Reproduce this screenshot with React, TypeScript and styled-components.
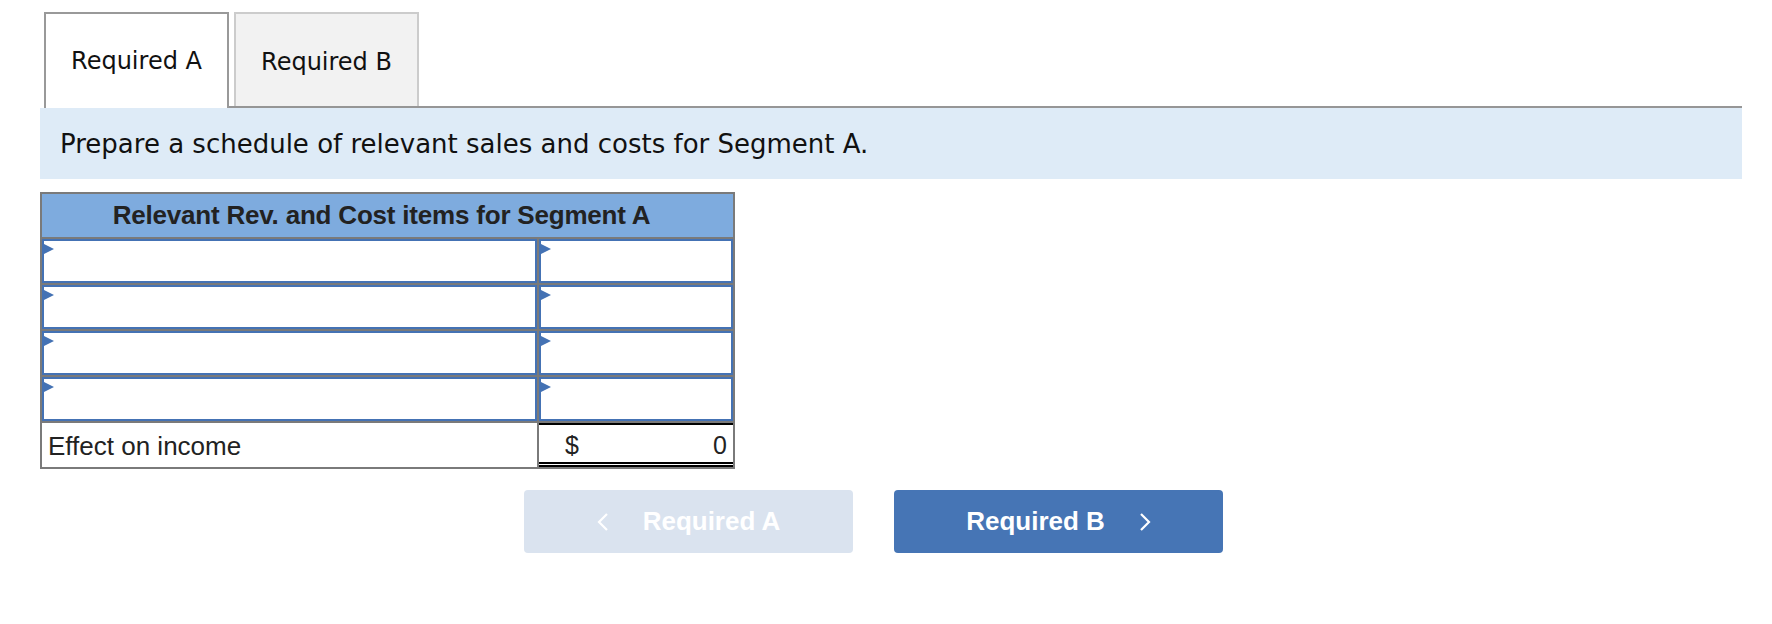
import styled, { createGlobalStyle } from "styled-components";

const GlobalStyle = createGlobalStyle`
  body {
    margin: 0;
    background: #fff;
    font-family: "DejaVu Sans", Verdana, sans-serif;
  }
`;

const entryRows = [0, 1, 2, 3];

function Chevron({ dir }: { dir: "left" | "right" }) {
    const points = dir === "left" ? "10,1 2,9 10,17" : "2,1 10,9 2,17";
    return (
        <svg width="12" height="18" viewBox="0 0 12 18">
            <polyline points={points} fill="none" stroke="#fff" strokeWidth="2.2" />
        </svg>
    );
}

export default function App() {
    return (
        <>
            <GlobalStyle />
            <Page>
                <TabBar>
                    <ActiveTab>Required A</ActiveTab>
                    <TabRest>
                        <Tab>Required B</Tab>
                    </TabRest>
                </TabBar>

                <Instruction>
                    Prepare a schedule of relevant sales and costs for Segment A.
                </Instruction>

                <Schedule>
                    <colgroup>
                        <Col $w={495} />
                        <Col $w={194} />
                    </colgroup>
                    <thead>
                        <tr>
                            <HeaderCell colSpan={2}>
                                Relevant Rev. and Cost items for Segment A
                            </HeaderCell>
                        </tr>
                    </thead>
                    <tbody>
                        {entryRows.map((idx) => (
                            <tr key={idx}>
                                <EntryCell>
                                    <EntryInput />
                                </EntryCell>
                                <EntryCell>
                                    <EntryInput />
                                </EntryCell>
                            </tr>
                        ))}
                        <tr>
                            <TotalLabel>Effect on income</TotalLabel>
                            <TotalCell>
                                <TotalInner>
                                    <span>$</span>
                                    <span>0</span>
                                </TotalInner>
                            </TotalCell>
                        </tr>
                    </tbody>
                </Schedule>

                <NavRow>
                    <NavButton $disabled>
                        <Chevron dir="left" />
                        Required A
                    </NavButton>
                    <NavButton>
                        Required B
                        <Chevron dir="right" />
                    </NavButton>
                </NavRow>
            </Page>
        </>
    );
}

const Page = styled.div`
    width: 1702px;
    padding: 12px 0 0 40px;
`;

const TabBar = styled.div`
    display: flex;
    align-items: flex-end;
    padding-left: 4px;
`;

const ActiveTab = styled.div`
    box-sizing: border-box;
    width: 185px;
    height: 96px;
    display: flex;
    align-items: center;
    justify-content: center;
    border: 2px solid #999;
    border-bottom: none;
    background: #fff;
    font-size: 24px;
    color: #111;
`;

const TabRest = styled.div`
    flex: 1;
    display: flex;
    align-items: flex-end;
    height: 96px;
    box-sizing: border-box;
    border-bottom: 2px solid #969696;
`;

const Tab = styled.div`
    box-sizing: border-box;
    width: 185px;
    height: 94px;
    margin-left: 5px;
    padding-top: 4px;
    display: flex;
    align-items: center;
    justify-content: center;
    border: 2px solid #ccc;
    border-bottom: none;
    background: #f2f2f2;
    font-size: 24px;
    color: #111;
`;

const Instruction = styled.div`
    height: 71px;
    display: flex;
    align-items: center;
    padding-left: 20px;
    background: #deebf7;
    font-size: 26px;
    color: #111;
`;

const Schedule = styled.table`
    margin-top: 13px;
    width: 695px;
    table-layout: fixed;
    border-collapse: separate;
    border-spacing: 2px;
    background: #7a7a7a;
    font-family: "Liberation Sans", Arial, sans-serif;
    color: #222;
`;

const Col = styled.col<{ $w: number }>`
    width: ${({ $w }) => $w}px;
`;

const HeaderCell = styled.th`
    height: 43px;
    padding: 0 12px 0 0;
    background: #7eabde;
    font-size: 26px;
    font-weight: bold;
    text-align: center;
    letter-spacing: -0.2px;
`;

const EntryCell = styled.td`
    position: relative;
    height: 44px;
    padding: 0;
    background: #fff;

    &::before {
        content: "";
        position: absolute;
        left: 0;
        top: 4px;
        border-left: 12px solid #4472b4;
        border-top: 6.5px solid transparent;
        border-bottom: 6.5px solid transparent;
        pointer-events: none;
    }
`;

const EntryInput = styled.input`
    display: block;
    box-sizing: border-box;
    width: 100%;
    height: 44px;
    margin: 0;
    padding: 0 6px;
    border: 2px solid #4472b4;
    outline: none;
    font: inherit;
`;

const TotalLabel = styled.td`
    box-sizing: border-box;
    height: 44px;
    padding: 3px 0 0 6px;
    background: #fff;
    font-size: 26px;
    vertical-align: middle;
`;

const TotalCell = styled.td`
    box-sizing: border-box;
    height: 44px;
    padding: 3px 0 0 0;
    background: #fff;
    border-top: 2px solid #000;
    border-bottom: 5px double #000;
    font-size: 25px;
    vertical-align: middle;
`;

const TotalInner = styled.div`
    display: flex;
    justify-content: space-between;
    padding: 0 6px 0 26px;
`;

const NavRow = styled.div`
    display: flex;
    gap: 41px;
    margin-top: 21px;
    padding-left: 484px;
`;

const NavButton = styled.div<{ $disabled?: boolean }>`
    width: 329px;
    height: 63px;
    display: flex;
    align-items: center;
    justify-content: center;
    gap: 34px;
    border-radius: 4px;
    background: ${({ $disabled }) => ($disabled ? "#dae3ef" : "#4675b5")};
    color: #fff;
    font-family: "Liberation Sans", Arial, sans-serif;
    font-size: 26px;
    font-weight: bold;
`;
